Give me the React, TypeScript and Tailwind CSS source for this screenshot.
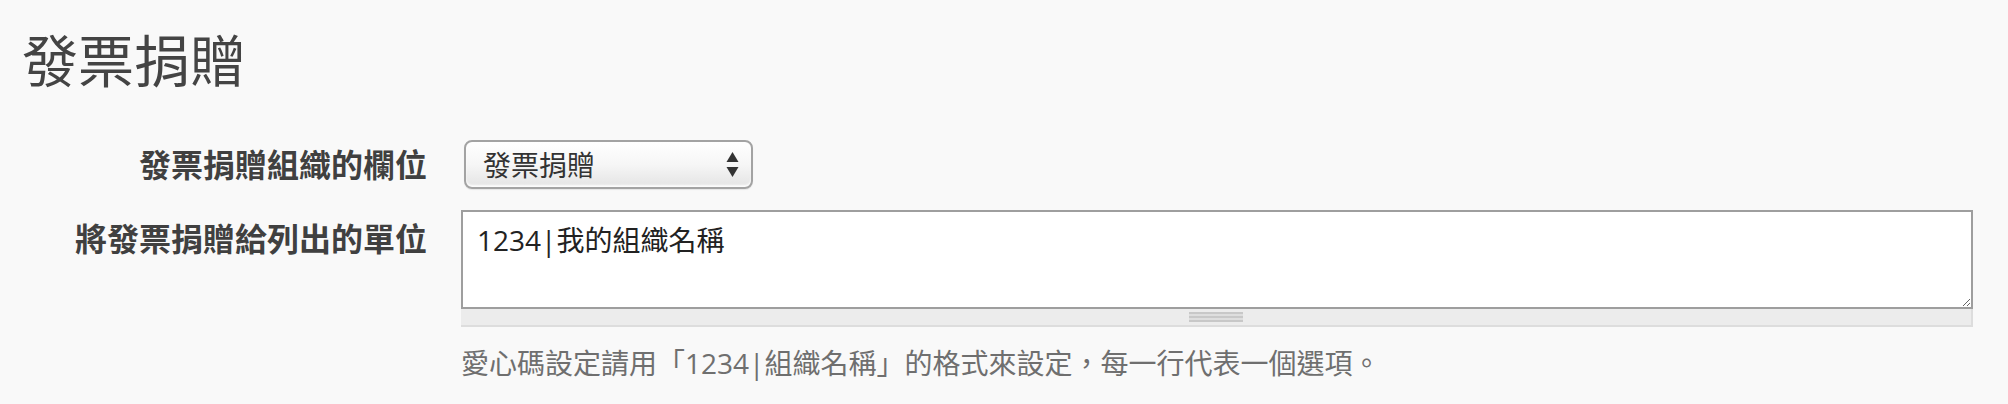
import React from 'react';

const font = { fontFamily: '"Open Sans", "Noto Sans CJK TC", sans-serif' };

function SelectBox() {
  return (
    <div className="ml-[3px] flex h-[49px] w-[289px] items-center justify-between rounded-[8px] border-2 border-[#a3a3a3] bg-gradient-to-b from-[#ffffff] via-[#f6f6f6] to-[#e4e4e4] pl-[17px] pr-[12px] shadow-[inset_0_-2px_2px_rgba(255,255,255,0.9),0_1px_1px_rgba(0,0,0,0.08)]">
      <span className="text-[28px] leading-none text-[#333]">發票捐贈</span>
      <svg width="13" height="26" viewBox="0 0 13 26" className="text-[#333]">
        <path d="M6.5 0 L12.5 10 L0.5 10 Z" fill="currentColor" />
        <path d="M0.5 15 L12.5 15 L6.5 25 Z" fill="currentColor" />
      </svg>
    </div>
  );
}

function Grippie() {
  return (
    <div className="flex h-[18px] items-center justify-center border-b-2 border-r-2 border-[#dddddd] bg-[#ececec]">
      <div className="flex w-[54px] flex-col">
        <div className="h-[2px] bg-[#c8c8c8]" />
        <div className="h-[2px] bg-[#dedede]" />
        <div className="h-[2px] bg-[#c8c8c8]" />
        <div className="h-[2px] bg-[#dedede]" />
        <div className="h-[2px] bg-[#c8c8c8]" />
      </div>
    </div>
  );
}

export default function App() {
  return (
    <div className="min-h-[404px] w-full bg-[#f9f9f9] pl-[22px] pr-[35px] pt-[27px]" style={font}>
      <h1 className="text-[56px] font-normal leading-[1.2] text-[#444]">發票捐贈</h1>

      <div className="mt-[46px] grid grid-cols-[405px_1fr] gap-x-[34px]">
        <label className="self-center text-right text-[32px] font-bold leading-none text-[#404040]">
          發票捐贈組織的欄位
        </label>
        <div>
          <SelectBox />
        </div>

        <label className="mt-[20px] pt-[14px] text-right text-[32px] font-bold leading-none text-[#404040]">
          將發票捐贈給列出的單位
        </label>
        <div className="mt-[21px] flex flex-col">
          <textarea
            className="block h-[99px] w-full resize-y border-2 border-[#9e9e9e] bg-white px-[14px] pt-[12px] text-[28px] leading-[1.2] text-[#222] outline-none"
            defaultValue="1234|我的組織名稱"
            rows={2}
          />
          <Grippie />
          <p className="mt-[20px] text-[28px] leading-[1.2] text-[#6f6f6f]">
            愛心碼設定請用「1234|組織名稱」的格式來設定，每一行代表一個選項。
          </p>
        </div>
      </div>
    </div>
  );
}
